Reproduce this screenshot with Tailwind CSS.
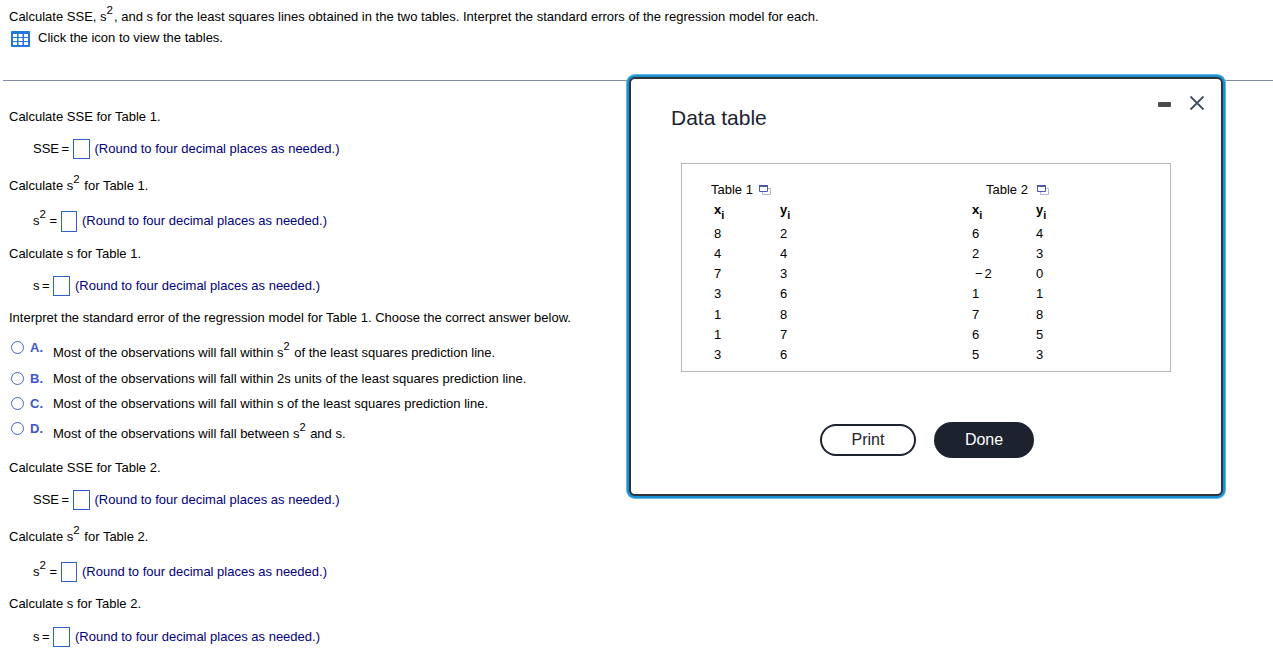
<!DOCTYPE html>
<html lang="en">
<head>
    <meta charset="UTF-8">
    <meta name="viewport" content="width=device-width, initial-scale=1.0">
    <title>Least Squares Exercise</title>
    <script src="https://cdn.jsdelivr.net/npm/@tailwindcss/browser@4"></script>
</head>
<body class="relative bg-white text-black h-[651px] overflow-hidden font-['Liberation_Sans',Arial,sans-serif] text-[13px] leading-[22px] whitespace-nowrap">

    <!-- Question -->
    <header class="pt-1.5 pl-[9px] h-20">
        <p class="h-5">Calculate SSE, s<span class="mr-px text-[11.5px] leading-0 align-[7px]">2</span>, and s for the least squares lines obtained in the two tables. Interpret the standard errors of the regression model for each.</p>
        <div class="flex mt-px h-5">
            <svg class="mt-1 ml-0.5 mr-2" width="19" height="16" viewBox="0 0 19 16">
                <rect width="19" height="16" rx="1" fill="#2477d8"/>
                <path fill="#fff" d="M2 3h4v3H2zM7.500 3h4v3h-4zM13 3h4v3h-4zM2 7h4v3H2zM7.500 7h4v3h-4zM13 7h4v3h-4zM2 11h4v3H2zM7.500 11h4v3h-4zM13 11h4v3h-4z"/>
            </svg>
            <span>Click the icon to view the tables.</span>
        </div>
    </header>
    <hr class="ml-[3px] border-[#8289a5]">

    <main class="pl-[9px] pt-[25px]">
        <!-- Table 1 -->
        <p class="h-5">Calculate SSE for Table 1.</p>
        <div class="flex mt-3 pl-6 h-5">
            <span class="w-10 [word-spacing:-1px]">SSE =</span>
            <span class="mt-px w-[17px] h-5 border border-[#2f62c8]"></span>
            <span class="ml-[4.5px] text-[#000080]">(Round to four decimal places as needed.)</span>
        </div>
        <p class="mt-[17px] h-5">Calculate s<span class="mr-px text-[11.5px] leading-0 align-[7px]">2</span> for Table 1.</p>
        <div class="flex mt-[15px] pl-6 h-5">
            <span class="w-7 [word-spacing:-1px]">s<span class="mr-px text-[11.5px] leading-0 align-[7px]">2</span> =</span>
            <span class="mt-px w-4 h-[21px] border border-[#2f62c8]"></span>
            <span class="ml-[5px] text-[#000080]">(Round to four decimal places as needed.)</span>
        </div>
        <p class="mt-[13px] h-5">Calculate s for Table 1.</p>
        <div class="flex mt-3 pl-6 h-5">
            <span class="w-5 [word-spacing:-1px]">s =</span>
            <span class="mt-px w-[17px] h-5 border border-[#2f62c8]"></span>
            <span class="ml-[5px] text-[#000080]">(Round to four decimal places as needed.)</span>
        </div>

        <!-- Choices -->
        <p class="mt-3 h-5">Interpret the standard error of the regression model for Table 1. Choose the correct answer below.</p>
        <div class="flex mt-2.5 pl-0.5 h-[31px]">
            <span class="mt-1 size-[13px] rounded-full border border-[#4763cf]"></span>
            <b class="ml-[6px] w-[23px] text-[#4156c5]">A.</b>
            <span class="mt-[5px]">Most of the observations will fall within s<span class="mr-px text-[11px] leading-0 align-[7px]">2</span> of the least squares prediction line.</span>
        </div>
        <div class="flex pl-0.5 h-[25px]">
            <span class="mt-1 size-[13px] rounded-full border border-[#4763cf]"></span>
            <b class="ml-[6px] w-[23px] text-[#4156c5]">B.</b>
            <span>Most of the observations will fall within 2s units of the least squares prediction line.</span>
        </div>
        <div class="flex pl-0.5 h-[25px]">
            <span class="mt-1 size-[13px] rounded-full border border-[#4763cf]"></span>
            <b class="ml-[6px] w-[23px] text-[#4156c5]">C.</b>
            <span>Most of the observations will fall within s of the least squares prediction line.</span>
        </div>
        <div class="flex pl-0.5 h-[25px]">
            <span class="mt-1 size-[13px] rounded-full border border-[#4763cf]"></span>
            <b class="ml-[6px] w-[23px] text-[#4156c5]">D.</b>
            <span class="mt-[5px]">Most of the observations will fall between s<span class="mr-px text-[11px] leading-0 align-[7px]">2</span> and s.</span>
        </div>

        <!-- Table 2 -->
        <p class="mt-3.5 h-5">Calculate SSE for Table 2.</p>
        <div class="flex mt-3 pl-6 h-5">
            <span class="w-10 [word-spacing:-1px]">SSE =</span>
            <span class="mt-px w-[17px] h-5 border border-[#2f62c8]"></span>
            <span class="ml-[4.5px] text-[#000080]">(Round to four decimal places as needed.)</span>
        </div>
        <p class="mt-[17px] h-5">Calculate s<span class="mr-px text-[11.5px] leading-0 align-[7px]">2</span> for Table 2.</p>
        <div class="flex mt-[15px] pl-6 h-5">
            <span class="w-7 [word-spacing:-1px]">s<span class="mr-px text-[11.5px] leading-0 align-[7px]">2</span> =</span>
            <span class="mt-px w-4 h-5 border border-[#2f62c8]"></span>
            <span class="ml-[5px] text-[#000080]">(Round to four decimal places as needed.)</span>
        </div>
        <p class="mt-3 h-5">Calculate s for Table 2.</p>
        <div class="flex mt-[13px] pl-6 h-5">
            <span class="w-5 [word-spacing:-1px]">s =</span>
            <span class="mt-px w-[17px] h-5 border border-[#2f62c8]"></span>
            <span class="ml-[5px] text-[#000080]">(Round to four decimal places as needed.)</span>
        </div>
    </main>

    <!-- Data table popup -->
    <div class="absolute left-[629px] top-[77px] w-[594px] h-[419px] bg-white border-2 border-[#30343a] rounded-md shadow-[0_0_0_2px_#1a90d2,0_0_0_3px_#62b8e6]">
        <div class="flex h-[84px] pl-10 pr-4">
            <h2 class="mt-[25px] text-[21px] leading-7 text-[#1c222e]">Data table</h2>
            <button class="ml-auto mt-[23px] w-[13px] h-[5px] rounded-[1px] bg-[#4b4b4b]" aria-label="Minimize"></button>
            <button class="mt-4 ml-[18px] size-4" aria-label="Close">
                <svg width="16" height="16" viewBox="0 0 16 16" fill="none" stroke="#44505e" stroke-width="1.800"><path d="M1.500 1.500l13 13M14.500 1.500l-13 13"/></svg>
            </button>
        </div>

        <div class="ml-[50px] w-[490px] h-[209px] border border-[#b5b5b5] pt-[15px] pl-[29px]">
            <div class="flex h-5">
                <div class="flex w-[275px]">
                    <span>Table 1</span>
                    <svg class="mt-1.5 ml-1.5" width="13" height="11" viewBox="0 0 13 11" fill="none"><path d="M3.500 3.500h8v6h-8z" stroke="#b0b4de"/><path d="M.5 1h8v5.500h-8z" fill="#fff" stroke="#4c5aa8"/><path d="M0 1h9" stroke="#4c5aa8" stroke-width="2"/></svg>
                </div>
                <div class="flex">
                    <span>Table 2</span>
                    <svg class="mt-1.5 ml-[9px]" width="13" height="11" viewBox="0 0 13 11" fill="none"><path d="M3.500 3.500h8v6h-8z" stroke="#b0b4de"/><path d="M.5 1h8v5.500h-8z" fill="#fff" stroke="#4c5aa8"/><path d="M0 1h9" stroke="#4c5aa8" stroke-width="2"/></svg>
                </div>
            </div>
            <div class="grid grid-cols-[66px_192px_64px_40px] pl-[3px] h-6 font-bold">
                <span>x<span class="leading-0 align-[-5px] text-[11px]">i</span></span>
                <span>y<span class="leading-0 align-[-5px] text-[11px]">i</span></span>
                <span>x<span class="leading-0 align-[-5px] text-[11px]">i</span></span>
                <span>y<span class="leading-0 align-[-5px] text-[11px]">i</span></span>
            </div>
            <div class="grid grid-cols-[66px_192px_64px_40px] grid-rows-[20px_20px_20px_21px_20px_20px_20px] pl-[3px]">
                <span>8</span><span>2</span><span>6</span><span>4</span>
                <span>4</span><span>4</span><span>2</span><span>3</span>
                <span>7</span><span>3</span><span class="flex gap-0.5 pl-[3px]"><i class="not-italic">−</i>2</span><span>0</span>
                <span>3</span><span>6</span><span>1</span><span>1</span>
                <span>1</span><span>8</span><span>7</span><span>8</span>
                <span>1</span><span>7</span><span>6</span><span>5</span>
                <span>3</span><span>6</span><span>5</span><span>3</span>
            </div>
        </div>

        <div class="flex items-center gap-[18px] mt-[50px] pl-[189px] text-[16px]">
            <button class="w-24 h-8 rounded-full border-2 border-[#1c222e] text-[#1c222e]">Print</button>
            <button class="w-[100px] h-9 rounded-full bg-[#1c222e] text-white">Done</button>
        </div>
    </div>
</body>
</html>
